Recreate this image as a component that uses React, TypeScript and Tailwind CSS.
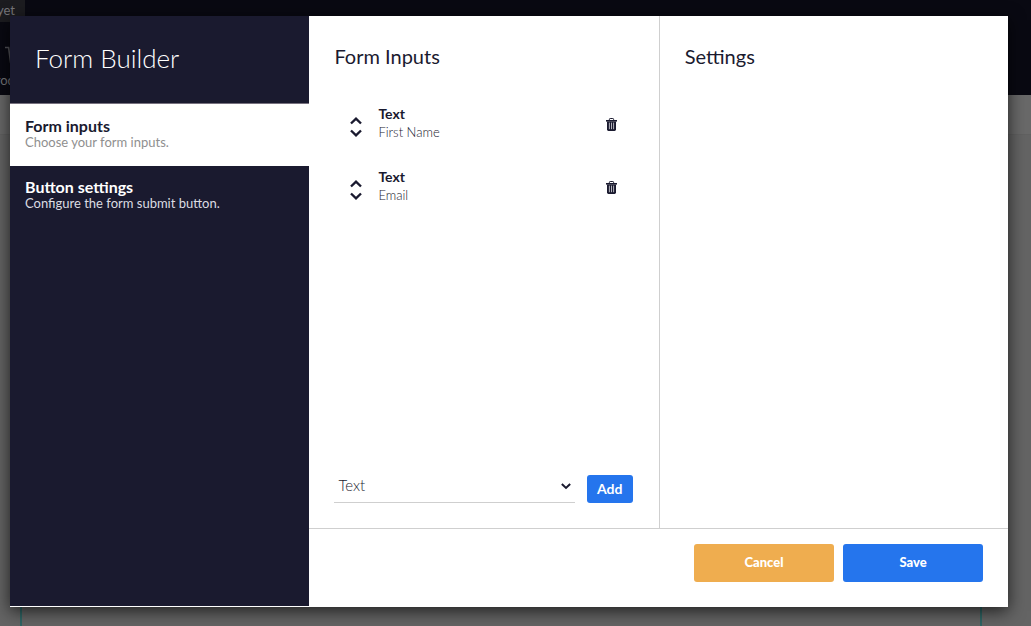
import React, { useState } from 'react';

const ChevronIcon: React.FC<{ className: string }> = ({ className }) => (
  <svg className={className} viewBox="0 0 12 8" fill="none" stroke="currentColor" strokeWidth="2.4" aria-hidden="true">
    <path d="M1 1.5 L6 6.3 L11 1.5" />
  </svg>
);

const TrashIcon: React.FC = () => (
  <svg className="h-[13px] w-[11px]" viewBox="0 0 11 13" fill="currentColor" aria-hidden="true">
    <path d="M3.4 2V1.3q0-.8.8-.8h2.6q.8 0 .8.8V2" fill="none" stroke="currentColor" />
    <path d="M0 2h11v1.6H0z" />
    <path d="M1 3.4h9v8.2q0 1.4-1.4 1.4H2.4Q1 13 1 11.6z" />
    <path d="M3.4 4.6v6.6M5.5 4.6v6.6M7.6 4.6v6.6" stroke="#c4c4cc" strokeWidth="0.9" />
  </svg>
);

const steps = [
  { id: 'inputs', title: 'Form inputs', hint: 'Choose your form inputs.' },
  { id: 'button', title: 'Button settings', hint: 'Configure the form submit button.' },
];

/* Editor page that stays visible around the dialog */
const EditorPage: React.FC = () => (
  <div className="flex min-h-screen flex-col overflow-hidden bg-[#646464]" aria-hidden="true">
    <div className="h-[95px] overflow-hidden bg-[#090912] text-[#77777b]">
      <div className="flex h-[22px] w-[25px] justify-end bg-[#1c1c20] pr-[10px] text-[13px] leading-5">yet</div>
      <div className="flex w-7 flex-col pt-6">
        <svg className="ml-1 h-[18px] w-6" viewBox="0 0 24 18" fill="none" stroke="#55555b" strokeWidth="1.6">
          <path d="M1 1.5h3.6l2 15h14" />
        </svg>
        <div className="-ml-3 pt-2 text-[13px] leading-4">Products</div>
      </div>
    </div>
    <div className="h-10 border-b border-[#616161] bg-[#696969]" />
    <div className="ml-5 mr-[49px] flex-1 border-x-2 border-[#2f6463]" />
  </div>
);

const App: React.FC = () => {
  const [active, setActive] = useState('inputs');
  const [fields, setFields] = useState(['First Name', 'Email']);

  return (
    <div className="relative font-['Lato',sans-serif] text-[#1a1a2f]">
      <EditorPage />

      <div className="absolute inset-0 flex pb-[19px] pl-[10px] pr-[23px] pt-4">
        <div role="dialog" aria-label="Form Builder" className="flex flex-1 bg-white shadow-[0_4px_16px_rgba(0,0,0,0.7)]">
          {/* Steps */}
          <aside className="mb-px w-[30%] bg-[#1a1a2f]">
            <h1 className="border-b border-[#77717f] px-[25px] pb-[25px] pt-[23px] text-[26px] font-light leading-[39px] text-white">
              Form Builder
            </h1>
            <nav>
              {steps.map((step) => (
                <button
                  key={step.id}
                  type="button"
                  onClick={() => setActive(step.id)}
                  className={
                    step.id === active
                      ? 'block w-full bg-white px-[15px] pb-4 pt-[14px] text-left'
                      : 'block w-full px-[15px] pb-4 pt-[13px] text-left text-white'
                  }
                >
                  <span className="block text-base font-bold leading-4">{step.title}</span>
                  <span
                    className={
                      step.id === active
                        ? 'block text-[13px] leading-4 text-[#8f8f8f]'
                        : 'block text-[13px] leading-4 text-[#dcdce2]'
                    }
                  >
                    {step.hint}
                  </span>
                </button>
              ))}
            </nav>
          </aside>

          <div className="flex flex-1 flex-col">
            <div className="flex flex-1">
              {/* Input list */}
              <section className="flex w-1/2 flex-col pb-[25px] pl-[25px] pr-[26px] pt-[26px]">
                <h2 className="text-xl leading-7">Form Inputs</h2>
                <ul className="flex-1 pt-[21px]">
                  {fields.map((name) => (
                    <li key={name} className="flex h-[63px] items-center px-4">
                      <span className="flex flex-col gap-1 pt-2">
                        <ChevronIcon className="h-2 w-3 rotate-180" />
                        <ChevronIcon className="h-2 w-3" />
                      </span>
                      <span className="flex-1 pl-4">
                        <span className="block text-sm font-bold leading-[18px]">Text</span>
                        <span className="block text-[13px] font-light leading-[18px]">{name}</span>
                      </span>
                      <button
                        type="button"
                        className="pt-1"
                        aria-label={`Remove ${name}`}
                        onClick={() => setFields(fields.filter((f) => f !== name))}
                      >
                        <TrashIcon />
                      </button>
                    </li>
                  ))}
                </ul>
                <div className="flex items-end gap-3">
                  <div className="relative flex-1">
                    <select
                      aria-label="Input type"
                      className="block h-[33px] w-full appearance-none border-b border-[#cfcfcf] bg-white pb-0.5 pl-1 text-[15px] font-light"
                    >
                      <option>Text</option>
                      <option>Email</option>
                      <option>Checkbox</option>
                    </select>
                    <ChevronIcon className="pointer-events-none absolute right-1 top-3 h-2 w-[10px]" />
                  </div>
                  <button
                    type="button"
                    onClick={() => setFields([...fields, `Field ${fields.length + 1}`])}
                    className="h-7 w-[46px] rounded-[3px] bg-[#2575ed] text-sm font-bold text-white"
                  >
                    Add
                  </button>
                </div>
              </section>

              <section className="w-1/2 border-l border-[#cfcfcf] px-[25px] pt-[26px]">
                <h2 className="text-xl leading-7">Settings</h2>
              </section>
            </div>

            <footer className="flex justify-end gap-[9px] border-t border-[#cfcfcf] px-[25px] pb-[25px] pt-[15px] text-[13px] font-black text-white">
              <button type="button" className="h-[38px] w-[140px] rounded-[3px] bg-[#efad4f]">Cancel</button>
              <button type="button" className="h-[38px] w-[140px] rounded-[3px] bg-[#2575ed]">Save</button>
            </footer>
          </div>
        </div>
      </div>
    </div>
  );
};

export default App;
